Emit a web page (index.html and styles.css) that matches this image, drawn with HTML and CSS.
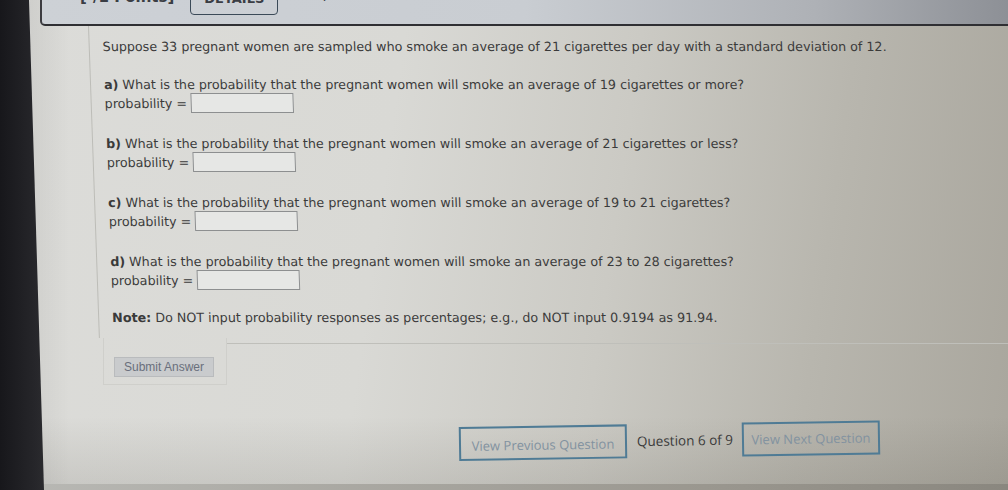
FILE: index.html
```html
<!DOCTYPE html>
<html>
<head>
<meta charset="utf-8">
<link rel="stylesheet" href="styles.css">
</head>
<body>
<div class="screen">
  <div class="bezel"></div>
  <div class="page">
    <div class="header">
      <span class="points">[-/1 Points]</span>
      <span class="details">DETAILS</span>
      <span class="subs">0/2 Submissions Used</span>
    </div>
    <div class="question">
      <p class="intro">Suppose 33 pregnant women are sampled who smoke an average of 21 cigarettes per day with a standard deviation of 12.</p>
      <div class="part">
        <div class="ask"><b>a)</b> What is the probability that the pregnant women will smoke an average of 19 cigarettes or more?</div>
        <div class="ans">probability = <span class="box"></span></div>
      </div>
      <div class="part">
        <div class="ask"><b>b)</b> What is the probability that the pregnant women will smoke an average of 21 cigarettes or less?</div>
        <div class="ans">probability = <span class="box"></span></div>
      </div>
      <div class="part">
        <div class="ask"><b>c)</b> What is the probability that the pregnant women will smoke an average of 19 to 21 cigarettes?</div>
        <div class="ans">probability = <span class="box"></span></div>
      </div>
      <div class="part">
        <div class="ask"><b>d)</b> What is the probability that the pregnant women will smoke an average of 23 to 28 cigarettes?</div>
        <div class="ans">probability = <span class="box"></span></div>
      </div>
      <p class="note"><b>Note:</b> Do NOT input probability responses as percentages; e.g., do NOT input 0.9194 as 91.94.</p>
    </div>
    <div class="submit-row">
      <div class="submit-wrap"><span class="submit">Submit Answer</span></div>
      <div class="rule"></div>
    </div>
    <div class="nav">
      <span class="navbtn prev">View Previous Question</span>
      <span class="count">Question 6 of 9</span>
      <span class="navbtn next">View Next Question</span>
    </div>
    <div class="bottom-strip"></div>
  </div>
</div>
</body>
</html>
```

FILE: styles.css
```css
html, body {
  margin: 0;
  padding: 0;
  width: 1008px;
  height: 490px;
  overflow: hidden;
}
body {
  background: #1c1c20;
}
.screen {
  position: relative;
  width: 1008px;
  height: 490px;
}
.bezel {
  position: absolute;
  left: 0;
  top: 0;
  width: 50px;
  height: 490px;
  background: linear-gradient(90deg, #17171b 0%, #26262a 70%, #2e2e31 100%);
  clip-path: polygon(0 0, 29px 0, 44px 100%, 0 100%);
  z-index: 5;
}
.page {
  height: 490px;
  display: flex;
  flex-direction: column;
  background:
    linear-gradient(90deg, rgba(0,0,0,0.10) 0px, rgba(0,0,0,0) 70px),
    linear-gradient(180deg, rgba(0,0,0,0) 85%, rgba(60,55,45,0.12) 100%),
    linear-gradient(98deg, #dcdcd9 0%, #d9d9d5 38%, #cbcac4 60%, #b8b6ae 80%, #a9a69d 100%);
  font-family: "DejaVu Sans", Verdana, sans-serif;
  color: #3b3b3b;
}
.header {
  margin-left: 40px;
  height: 24px;
  border-left: 2px solid #3c3c40;
  border-bottom: 2px solid #2f2f33;
  border-bottom-left-radius: 5px;
  background: linear-gradient(90deg, #cdd1d6 0%, #c9cdd2 50%, #aeb1b6 80%, #8d9096 100%);
  display: flex;
  align-items: flex-start;
  overflow: hidden;
  flex-shrink: 0;
}
.points {
  margin-left: 38px;
  margin-top: -12px;
  font-weight: bold;
  font-size: 15px;
  color: #3a3d44;
}
.details {
  margin-left: 16px;
  margin-top: -12px;
  width: 88px;
  height: 27px;
  border: 1.5px solid #3b4a58;
  border-radius: 4px;
  font-size: 13px;
  font-weight: bold;
  color: #3a3d44;
  text-align: center;
  line-height: 20px;
  box-sizing: border-box;
}
.subs {
  margin-left: 36px;
  margin-top: -14px;
  font-size: 15px;
  color: #3a3d44;
}
.question {
  margin-left: 88px;
  border-left: 1px solid #bdbdb8;
  padding: 13px 0 0 13px;
  font-size: 12.7px;
  transform: skewX(2deg);
  transform-origin: 0 0;
  flex-shrink: 0;
}
.intro {
  margin: 0;
  line-height: 15px;
  color: #3a3a3a;
}
.part {
  margin-top: 23px;
}
.ask {
  line-height: 16px;
}
.ask b, .note b {
  color: #3a3a3a;
}
.ans {
  display: flex;
  align-items: center;
  margin-top: 0;
  height: 20px;
}
.box {
  display: inline-block;
  margin-left: 4px;
  width: 103px;
  height: 20px;
  border: 1px solid #8d8f90;
  background: #e6e7e5;
  box-sizing: border-box;
}
.note {
  margin: 20px 0 0 0;
  line-height: 15px;
  padding-bottom: 13px;
}
.submit-row {
  display: flex;
  align-items: flex-start;
  margin-left: 103px;
  flex-shrink: 0;
}
.submit-wrap {
  border: 1px solid #cfcfcb;
  border-top: none;
  padding: 18px 12px 7px 10px;
}
.submit {
  display: inline-block;
  width: 100px;
  height: 20px;
  background: #c9cbcd;
  border: 1px solid #b9bbbd;
  box-sizing: border-box;
  font-family: "Liberation Sans", Arial, sans-serif;
  font-size: 12px;
  line-height: 18px;
  color: #6a6f7c;
  text-align: center;
}
.rule {
  flex: 1;
  height: 1px;
  background: #bfbfba;
  margin-top: 5px;
}
.nav {
  display: flex;
  align-items: center;
  margin-left: 459px;
  margin-top: 42px;
  font-family: "Open Sans", sans-serif;
  flex-shrink: 0;
  transform: rotate(-0.9deg);
  transform-origin: 0 50%;
}
.navbtn {
  border: 2px solid #4f7b95;
  box-sizing: border-box;
  color: #8292a0;
  font-size: 13px;
  text-align: center;
}
.prev {
  width: 168px;
  height: 34px;
  line-height: 30px;
  padding-top: 2px;
}
.next {
  width: 138px;
  height: 34px;
  line-height: 30px;
}
.count {
  margin: 0 9px 0 10px;
  font-size: 13.5px;
  color: #3a3a3a;
}
.bottom-strip {
  margin-top: auto;
  height: 6px;
  background: linear-gradient(90deg, #b9b9b5, #9a978f 70%, #8a877f);
}
```
